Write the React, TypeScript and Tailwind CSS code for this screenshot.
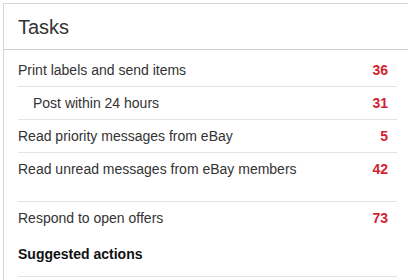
const tasks = [
  { label: "Print labels and send items", count: 36, cls: "pt-[12px] pb-[8px] border-b" },
  { label: "Post within 24 hours", count: 31, cls: "py-[8px] pl-[15px] border-b" },
  { label: "Read priority messages from eBay", count: 5, cls: "py-[8px] border-b" },
  { label: "Read unread messages from eBay members", count: 42, cls: "pt-[8px] pb-[24px] border-b" },
  { label: "Respond to open offers", count: 73, cls: "py-[8px]" },
];

export default function App() {
  return (
    <div className="h-[280px] w-[408px] overflow-hidden bg-white pl-[3px] pt-[3px] font-['Liberation_Sans',Arial,sans-serif] text-[#333]">
      <div className="w-[420px] border-l border-t border-[#d6d6d6] h-[300px]">
        <div className="flex h-[46px] items-center border-b border-[#cfcfcf] pl-[14px]">
          <h2 className="text-[20px] leading-none">Tasks</h2>
        </div>
        <div className="ml-[14px] w-[379px] text-[14px] leading-[16px]">
          {tasks.map((t) => (
            <div
              key={t.label}
              className={`flex items-start justify-between border-[#e3e3e3] pr-[9px] ${t.cls}`}
            >
              <span>{t.label}</span>
              <span className="font-bold text-[#d41f32]">{t.count}</span>
            </div>
          ))}
          <div className="border-b border-[#e3e3e3] pt-[12px] pb-[14px] font-bold text-[#111]">
            Suggested actions
          </div>
        </div>
      </div>
    </div>
  );
}
